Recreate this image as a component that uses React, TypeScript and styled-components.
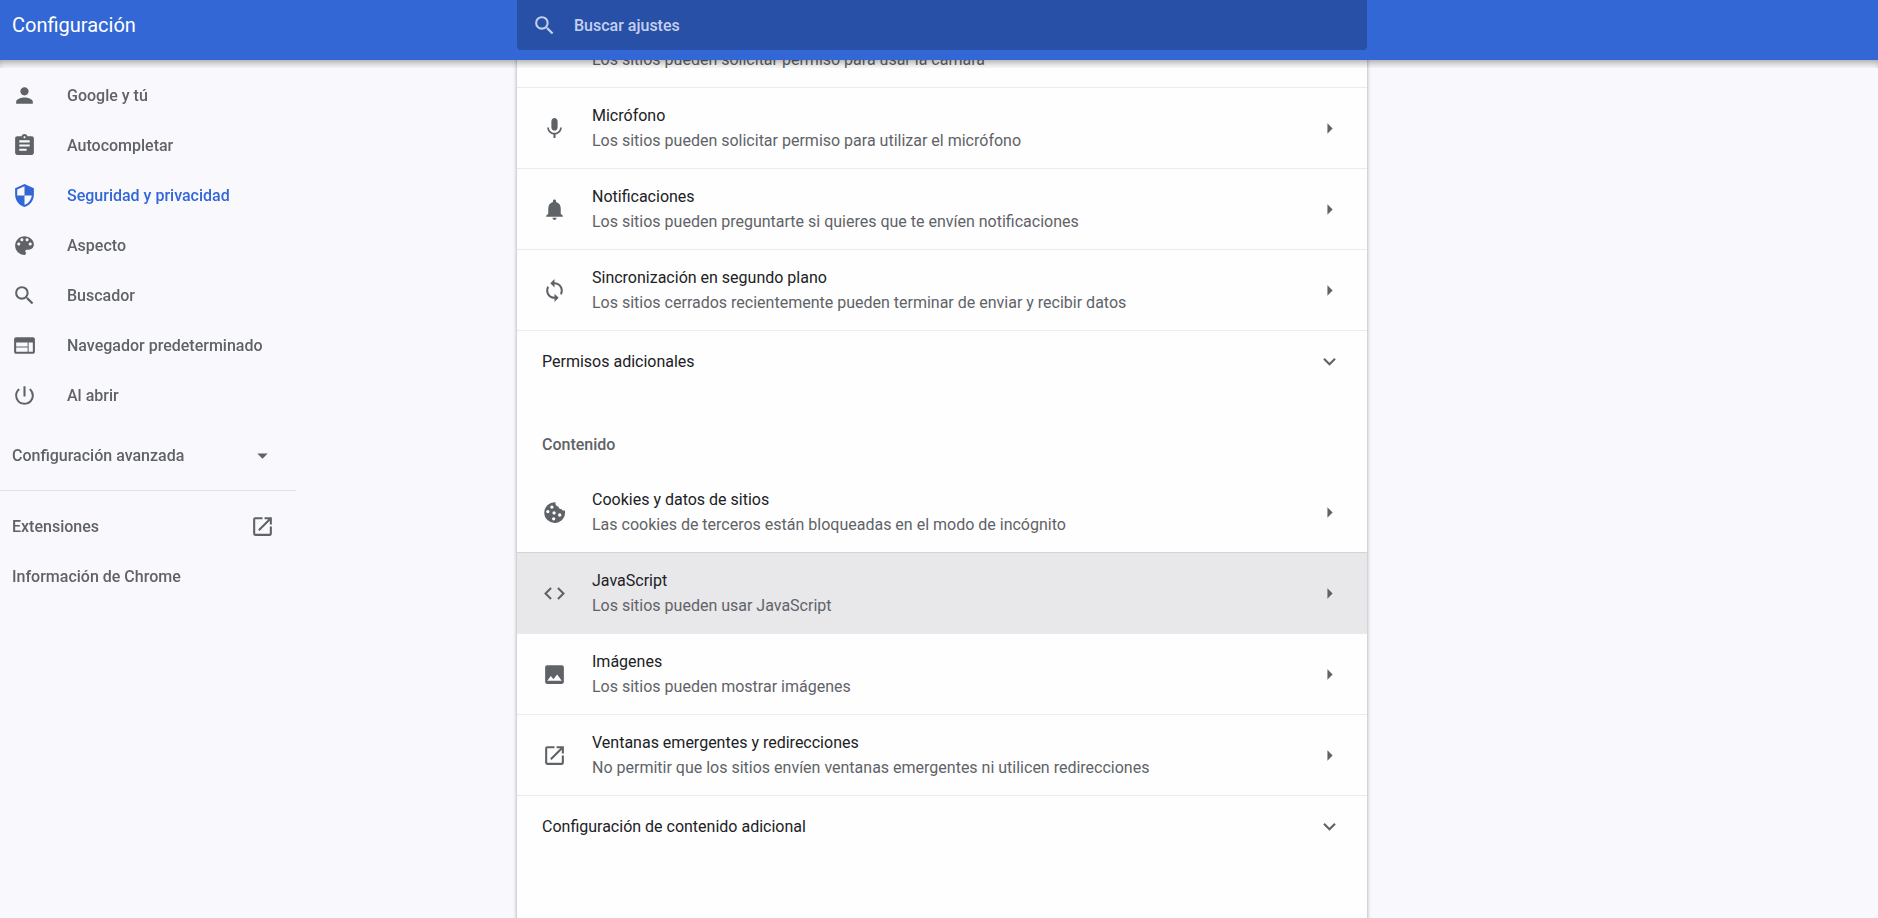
import React, { useLayoutEffect, useRef } from "react";
import styled, { createGlobalStyle } from "styled-components";
import type { IconType } from "react-icons";
import {
  MdArrowDropDown,
  MdArrowRight,
  MdAssignment,
  MdCode,
  MdExpandMore,
  MdImage,
  MdNotifications,
  MdOpenInNew,
  MdPerson,
  MdPowerSettingsNew,
  MdSearch,
  MdSecurity,
  MdSync,
  MdVideocam,
  MdWeb,
} from "react-icons/md";

const color = {
  brand: "#3367d6",
  searchField: "#2850a7",
  searchText: "#c3d0ee",
  page: "#f9f9fd",
  card: "#fefefe",
  text: "#202124",
  secondary: "#5f6368",
  line: "#ebebef",
  hover: "#e8e7ea",
  hoverLine: "#d4d4d8",
};

const GlobalStyle = createGlobalStyle`
  *, *::before, *::after { box-sizing: border-box; }
  body {
    margin: 0;
    background: ${color.page};
    color: ${color.text};
    font-family: Roboto, "Liberation Sans", sans-serif;
    font-size: 16px;
    line-height: 25px;
  }
  button, input { font: inherit; color: inherit; }
`;

const columns =
  "max(300px, calc(50% - 422px)) minmax(0, 850px) minmax(0, 1fr)";

const Shell = styled.div`
  display: flex;
  flex-direction: column;
  height: 100vh;
`;

const Header = styled.header`
  position: relative;
  z-index: 1;
  flex: none;
  display: grid;
  grid-template-columns: ${columns};
  padding-bottom: 10px;
  background: ${color.brand};

  &::after {
    content: "";
    position: absolute;
    top: 100%;
    left: 0;
    right: 0;
    height: 8px;
    box-shadow: inset 0 6px 8px -4px rgba(0, 0, 0, 0.4);
    pointer-events: none;
  }
`;

const Title = styled.h1`
  margin: 0;
  padding-left: 12px;
  color: #fff;
  font-size: 20px;
  font-weight: 400;
  line-height: 50px;
`;

const Search = styled.label`
  display: flex;
  align-items: center;
  gap: 17px;
  height: 50px;
  padding: 0 15px;
  border-radius: 0 0 4px 4px;
  background: ${color.searchField};
  color: ${color.searchText};
`;

const SearchInput = styled.input`
  flex: 1;
  min-width: 0;
  padding: 0;
  border: 0;
  outline: 0;
  background: transparent;
  font-weight: 500;

  &::placeholder {
    color: ${color.searchText};
    opacity: 1;
  }
`;

const Scroller = styled.div`
  flex: 1;
  min-height: 0;
  display: grid;
  grid-template-columns: ${columns};
  grid-template-rows: max-content;
  overflow-y: auto;
  scrollbar-width: none;
`;

const Sidebar = styled.nav`
  position: sticky;
  top: 0;
  align-self: start;
  width: 296px;
  padding-top: 10px;
  color: ${color.secondary};
  font-weight: 500;
`;

const MenuLink = styled.a<{ $active?: boolean }>`
  display: flex;
  align-items: center;
  gap: 30px;
  height: 50px;
  padding: 0 12px;
  color: ${(p) => (p.$active ? color.brand : "inherit")};
  text-decoration: none;
`;

const MenuToggle = styled.button`
  display: flex;
  align-items: center;
  justify-content: space-between;
  width: 100%;
  height: 50px;
  margin: 10px 0;
  padding: 0 21px 0 12px;
  border: 0;
  background: none;
  text-align: left;
  cursor: pointer;
`;

const Divider = styled.hr`
  height: 1px;
  margin: 0 0 10px;
  border: 0;
  background: #e2e2e7;
`;

const FooterLink = styled(MenuLink)`
  justify-content: space-between;
  padding-right: 21px;
`;

const Card = styled.main`
  padding-bottom: 140px;
  background: ${color.card};
  box-shadow: 0 1px 3px rgba(60, 64, 67, 0.3),
    0 1px 4px 1px rgba(60, 64, 67, 0.15);
`;

const RowButton = styled.button<{ $hovered?: boolean }>`
  display: flex;
  align-items: center;
  gap: 25px;
  width: 100%;
  min-height: 81px;
  padding: 0 25px;
  border: 0;
  border-top: 1px solid ${(p) => (p.$hovered ? color.hoverLine : color.line)};
  background: ${(p) => (p.$hovered ? color.hover : "transparent")};
  color: ${color.text};
  text-align: left;
  cursor: pointer;

  h2 + & {
    border-top-color: transparent;
  }
`;

const ExpandButton = styled(RowButton)`
  min-height: 61px;
`;

const Texts = styled.span`
  flex: 1;
  min-width: 0;
  display: flex;
  flex-direction: column;
`;

const Secondary = styled.span`
  color: ${color.secondary};
`;

const SectionTitle = styled.h2`
  margin: 0;
  padding: 41px 25px 14px;
  color: ${color.secondary};
  font-size: 16px;
  font-weight: 500;
`;

const IconBox = styled.span`
  flex: none;
  display: flex;
  width: 25px;
  height: 25px;
  color: ${color.secondary};

  ${MenuLink} &, ${Search} & {
    color: inherit;
  }
`;

interface GlyphProps {
  size: number;
}

function CookieIcon({ size }: GlyphProps) {
  return (
    <svg width={size} height={size} viewBox="0 0 24 24" fill="currentColor">
      <path
        fillRule="evenodd"
        d="M22 10.2c-1.5.3-2.8-.2-3.4-1.5-1.7.2-2.8-.8-2.7-2.3-2.2-.2-3.4-2-2.9-4.3A10 10 0 1 0 22 10.2zM9.5 5.2a1.6 1.6 0 1 1 0 3.2 1.6 1.6 0 0 1 0-3.2zM5.6 9.5a1.6 1.6 0 1 1 0 3.2 1.6 1.6 0 0 1 0-3.2zM11.6 10.8a1.6 1.6 0 1 1 0 3.2 1.6 1.6 0 0 1 0-3.2zM17 12.8a1.6 1.6 0 1 1 0 3.2 1.6 1.6 0 0 1 0-3.2zM11.2 16.5a1.6 1.6 0 1 1 0 3.2 1.6 1.6 0 0 1 0-3.2z"
      />
    </svg>
  );
}

function MicIcon({ size }: GlyphProps) {
  return (
    <svg width={size} height={size} viewBox="0 0 24 24" fill="currentColor">
      <path d="M12 14c1.66 0 2.99-1.34 2.99-3L15 5c0-1.66-1.34-3-3-3S9 3.34 9 5v6c0 1.66 1.34 3 3 3zm5.3-3c0 3-2.54 5.1-5.3 5.1S6.7 14 6.7 11H5c0 3.41 2.72 6.23 6 6.72V21h2v-3.28c3.28-.48 6-3.3 6-6.72h-1.7z" />
    </svg>
  );
}

function PaletteIcon({ size }: GlyphProps) {
  return (
    <svg width={size} height={size} viewBox="0 0 24 24" fill="currentColor">
      <path d="M12 3c-4.97 0-9 4.03-9 9s4.03 9 9 9c.83 0 1.5-.67 1.5-1.5 0-.39-.15-.74-.39-1.01-.23-.26-.38-.61-.38-.99 0-.83.67-1.5 1.5-1.5H16c2.76 0 5-2.24 5-5 0-4.42-4.03-8-9-8zm-5.5 9c-.83 0-1.5-.67-1.5-1.5S5.67 9 6.5 9 8 9.67 8 10.5 7.33 12 6.5 12zm3-4C8.67 8 8 7.33 8 6.5S8.67 5 9.5 5s1.5.67 1.5 1.5S10.33 8 9.5 8zm5 0c-.83 0-1.5-.67-1.5-1.5S13.67 5 14.5 5s1.5.67 1.5 1.5S15.33 8 14.5 8zm3 4c-.83 0-1.5-.67-1.5-1.5S16.67 9 17.5 9s1.5.67 1.5 1.5-.67 1.5-1.5 1.5z" />
    </svg>
  );
}

type AnyIcon = IconType | React.FC<GlyphProps>;

function Icon({ of: Glyph }: { of: AnyIcon }) {
  return (
    <IconBox aria-hidden="true">
      <Glyph size={25} />
    </IconBox>
  );
}

interface RowProps {
  icon: AnyIcon;
  title: string;
  detail: string;
  hovered?: boolean;
}

function Row({ icon, title, detail, hovered }: RowProps) {
  return (
    <RowButton type="button" $hovered={hovered}>
      <Icon of={icon} />
      <Texts>
        <span>{title}</span>
        <Secondary>{detail}</Secondary>
      </Texts>
      <Icon of={MdArrowRight} />
    </RowButton>
  );
}

function ExpandRow({ title }: { title: string }) {
  return (
    <ExpandButton type="button" aria-expanded={false}>
      <Texts>{title}</Texts>
      <Icon of={MdExpandMore} />
    </ExpandButton>
  );
}

const menu: { icon: AnyIcon; label: string; active?: boolean }[] = [
  { icon: MdPerson, label: "Google y tú" },
  { icon: MdAssignment, label: "Autocompletar" },
  { icon: MdSecurity, label: "Seguridad y privacidad", active: true },
  { icon: PaletteIcon, label: "Aspecto" },
  { icon: MdSearch, label: "Buscador" },
  { icon: MdWeb, label: "Navegador predeterminado" },
  { icon: MdPowerSettingsNew, label: "Al abrir" },
];

const permissions: RowProps[] = [
  {
    icon: MdVideocam,
    title: "Cámara",
    detail: "Los sitios pueden solicitar permiso para usar la cámara",
  },
  {
    icon: MicIcon,
    title: "Micrófono",
    detail: "Los sitios pueden solicitar permiso para utilizar el micrófono",
  },
  {
    icon: MdNotifications,
    title: "Notificaciones",
    detail: "Los sitios pueden preguntarte si quieres que te envíen notificaciones",
  },
  {
    icon: MdSync,
    title: "Sincronización en segundo plano",
    detail:
      "Los sitios cerrados recientemente pueden terminar de enviar y recibir datos",
  },
];

const content: RowProps[] = [
  {
    icon: CookieIcon,
    title: "Cookies y datos de sitios",
    detail: "Las cookies de terceros están bloqueadas en el modo de incógnito",
  },
  {
    icon: MdCode,
    title: "JavaScript",
    detail: "Los sitios pueden usar JavaScript",
    hovered: true,
  },
  {
    icon: MdImage,
    title: "Imágenes",
    detail: "Los sitios pueden mostrar imágenes",
  },
  {
    icon: MdOpenInNew,
    title: "Ventanas emergentes y redirecciones",
    detail:
      "No permitir que los sitios envíen ventanas emergentes ni utilicen redirecciones",
  },
];

const INITIAL_SCROLL = 54;

export default function App() {
  const scroller = useRef<HTMLDivElement>(null);

  useLayoutEffect(() => {
    if (scroller.current) scroller.current.scrollTop = INITIAL_SCROLL;
  }, []);

  return (
    <Shell>
      <GlobalStyle />
      <Header>
        <Title>Configuración</Title>
        <Search>
          <Icon of={MdSearch} />
          <SearchInput
            type="search"
            aria-label="Buscar ajustes"
            placeholder="Buscar ajustes"
          />
        </Search>
      </Header>
      <Scroller ref={scroller}>
        <Sidebar>
          {menu.map((item) => (
            <MenuLink
              key={item.label}
              href="#"
              $active={item.active}
              aria-current={item.active ? "page" : undefined}
            >
              <Icon of={item.icon} />
              {item.label}
            </MenuLink>
          ))}
          <MenuToggle type="button" aria-expanded={false}>
            Configuración avanzada
            <Icon of={MdArrowDropDown} />
          </MenuToggle>
          <Divider />
          <FooterLink href="#">
            Extensiones
            <Icon of={MdOpenInNew} />
          </FooterLink>
          <FooterLink href="#">Información de Chrome</FooterLink>
        </Sidebar>
        <Card>
          {permissions.map((row) => (
            <Row key={row.title} {...row} />
          ))}
          <ExpandRow title="Permisos adicionales" />
          <SectionTitle>Contenido</SectionTitle>
          {content.map((row) => (
            <Row key={row.title} {...row} />
          ))}
          <ExpandRow title="Configuración de contenido adicional" />
        </Card>
      </Scroller>
    </Shell>
  );
}
